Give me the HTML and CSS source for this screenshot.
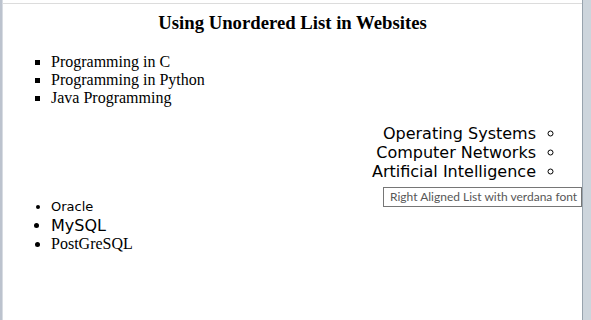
FILE: index.html
```html
<!DOCTYPE html>
<html>
<head>
<meta charset="utf-8">
<title>Unordered List</title>
<link rel="stylesheet" href="styles.css">
</head>
<body>
<div class="frame">
  <div class="edge-left"></div>
  <div class="page">
    <h3 class="title">Using Unordered List in Websites</h3>
    <ul class="list-square">
      <li>Programming in C</li>
      <li>Programming in Python</li>
      <li>Java Programming</li>
    </ul>
    <ul class="list-right">
      <li>Operating Systems</li>
      <li>Computer Networks</li>
      <li>Artificial Intelligence</li>
    </ul>
    <ul class="list-disc">
      <li class="oracle">Oracle</li>
      <li class="mysql">MySQL</li>
      <li class="postgres">PostGreSQL</li>
    </ul>
  </div>
  <div class="edge-right"></div>
  <div class="tooltip">Right Aligned List with verdana font</div>
</div>
</body>
</html>
```
FILE: styles.css
```css
html, body {
  margin: 0;
  padding: 0;
  background: #ffffff;
}
.frame {
  position: relative;
  display: flex;
  width: 591px;
  height: 320px;
  overflow: hidden;
}
.edge-left {
  width: 3px;
  background: #bcc3ce;
  border-right: 1px solid #d8dce2;
  box-sizing: border-box;
}
.page {
  flex: 1;
  margin-top: 3px;
  border-top: 1px solid #dcdcdc;
  padding: 8px 8px 0 8px;
  font-family: "Liberation Serif", serif;
  font-size: 16px;
  color: #000;
}
.edge-right {
  width: 8px;
  background: #cdd5dc;
  border-left: 1px solid #98a3ad;
}
.title {
  margin: 0 0 18.72px 0;
  font-size: 18.72px;
  font-weight: bold;
  text-align: center;
}
.list-square {
  list-style-type: square;
  margin: 0 0 17px 0;
  padding-left: 40px;
}
.list-right {
  direction: rtl;
  list-style-type: circle;
  margin: 0 0 16px 0;
  padding-right: 38px;
  font-family: "DejaVu Sans", Verdana, sans-serif;
  font-size: 16px;
  line-height: 19px;
}
.list-disc {
  list-style-type: disc;
  margin: 0;
  padding-left: 40px;
}
.oracle {
  font-family: "DejaVu Sans", Verdana, sans-serif;
  font-size: 13px;
  line-height: 20px;
}
.mysql {
  font-family: "DejaVu Sans", Verdana, sans-serif;
  font-size: 16px;
  line-height: 18px;
}
.postgres {
  font-family: "Liberation Serif", serif;
  font-size: 16px;
}
.tooltip {
  position: absolute;
  left: 383px;
  top: 187px;
  width: 199px;
  height: 20px;
  box-sizing: border-box;
  border: 1px solid #767676;
  background: #ffffff;
  color: #575757;
  font-family: Lato, "Noto Sans", sans-serif;
  font-size: 12px;
  line-height: 18px;
  padding: 0 6px;
  white-space: nowrap;
}
```
